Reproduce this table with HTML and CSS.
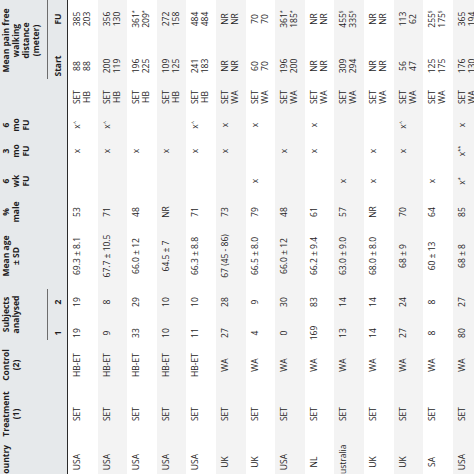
FILE: index.html
```html
<!DOCTYPE html>
<html>
<head>
<meta charset="utf-8">
<link rel="stylesheet" href="styles.css">
</head>
<body>
<div class="sheet">
  <div class="cols head">
    <div class="h tall">Country</div>
    <div class="h tall"><span>Treatment</span><span>(1)</span></div>
    <div class="h tall"><span>Control</span><span>(2)</span></div>
    <div class="h grp subj"><span>Subjects</span><span>analysed</span></div>
    <div class="h tall"><span>Mean age</span><span>± SD</span></div>
    <div class="h tall"><span>%</span><span>male</span></div>
    <div class="h tall"><span>6</span><span>wk</span><span>FU</span></div>
    <div class="h tall"><span>3</span><span>mo</span><span>FU</span></div>
    <div class="h tall"><span>6</span><span>mo</span><span>FU</span></div>
    <div class="h tall"></div>
    <div class="h grp mpf"><span>Mean pain free</span><span>walking</span><span>distance</span><span>(meter)</span></div>
    <div class="h sub">1</div>
    <div class="h sub">2</div>
    <div class="h sub">Start</div>
    <div class="h sub">FU</div>
  </div>
  <div class="body">
    <div class="cols row"><div class="c">USA</div><div class="c">SET</div><div class="c">HB-ET</div><div class="c">19</div><div class="c">19</div><div class="c">69.3 ± 8.1</div><div class="c">53</div><div class="c"></div><div class="c">x</div><div class="c"><span>x<sup>^</sup></span></div><div class="c"><span>SET</span><span>HB</span></div><div class="c"><span>88</span><span>88</span></div><div class="c"><span>385</span><span>203</span></div></div>
    <div class="cols row"><div class="c">USA</div><div class="c">SET</div><div class="c">HB-ET</div><div class="c">9</div><div class="c">8</div><div class="c">67.7 ± 10.5</div><div class="c">71</div><div class="c"></div><div class="c">x</div><div class="c"><span>x<sup>^</sup></span></div><div class="c"><span>SET</span><span>HB</span></div><div class="c"><span>200</span><span>119</span></div><div class="c"><span>356</span><span>130</span></div></div>
    <div class="cols row"><div class="c">USA</div><div class="c">SET</div><div class="c">HB-ET</div><div class="c">33</div><div class="c">29</div><div class="c">66.0 ± 12</div><div class="c">48</div><div class="c"></div><div class="c">x</div><div class="c"></div><div class="c"><span>SET</span><span>HB</span></div><div class="c"><span>196</span><span>225</span></div><div class="c"><span>361<sup>*</sup></span><span>209<sup>*</sup></span></div></div>
    <div class="cols row"><div class="c">USA</div><div class="c">SET</div><div class="c">HB-ET</div><div class="c">10</div><div class="c">10</div><div class="c">64.5 ± 7</div><div class="c">NR</div><div class="c"></div><div class="c">x</div><div class="c"></div><div class="c"><span>SET</span><span>HB</span></div><div class="c"><span>109</span><span>125</span></div><div class="c"><span>272</span><span>158</span></div></div>
    <div class="cols row"><div class="c">USA</div><div class="c">SET</div><div class="c">HB-ET</div><div class="c">11</div><div class="c">10</div><div class="c">66.3 ± 8.8</div><div class="c">71</div><div class="c"></div><div class="c">x</div><div class="c"><span>x<sup>^</sup></span></div><div class="c"><span>SET</span><span>HB</span></div><div class="c"><span>241</span><span>183</span></div><div class="c"><span>484</span><span>484</span></div></div>
    <div class="cols row"><div class="c">UK</div><div class="c">SET</div><div class="c">WA</div><div class="c">27</div><div class="c">28</div><div class="c">67 (45 - 86)</div><div class="c">73</div><div class="c"></div><div class="c">x</div><div class="c">x</div><div class="c"><span>SET</span><span>WA</span></div><div class="c"><span>NR</span><span>NR</span></div><div class="c"><span>NR</span><span>NR</span></div></div>
    <div class="cols row"><div class="c">UK</div><div class="c">SET</div><div class="c">WA</div><div class="c">4</div><div class="c">9</div><div class="c">66.5 ± 8.0</div><div class="c">79</div><div class="c">x</div><div class="c"></div><div class="c">x</div><div class="c"><span>SET</span><span>WA</span></div><div class="c"><span>60</span><span>70</span></div><div class="c"><span>70</span><span>70</span></div></div>
    <div class="cols row"><div class="c">USA</div><div class="c">SET</div><div class="c">WA</div><div class="c">0</div><div class="c">30</div><div class="c">66.0 ± 12</div><div class="c">48</div><div class="c"></div><div class="c">x</div><div class="c"></div><div class="c"><span>SET</span><span>WA</span></div><div class="c"><span>196</span><span>200</span></div><div class="c"><span>361<sup>*</sup></span><span>185<sup>*</sup></span></div></div>
    <div class="cols row"><div class="c">NL</div><div class="c">SET</div><div class="c">WA</div><div class="c">169</div><div class="c">83</div><div class="c">66.2 ± 9.4</div><div class="c">61</div><div class="c"></div><div class="c">x</div><div class="c">x</div><div class="c"><span>SET</span><span>WA</span></div><div class="c"><span>NR</span><span>NR</span></div><div class="c"><span>NR</span><span>NR</span></div></div>
    <div class="cols row"><div class="c">Australia</div><div class="c">SET</div><div class="c">WA</div><div class="c">13</div><div class="c">14</div><div class="c">63.0 ± 9.0</div><div class="c">57</div><div class="c">x</div><div class="c"></div><div class="c"></div><div class="c"><span>SET</span><span>WA</span></div><div class="c"><span>309</span><span>294</span></div><div class="c"><span>455<sup>§</sup></span><span>335<sup>§</sup></span></div></div>
    <div class="cols row"><div class="c">UK</div><div class="c">SET</div><div class="c">WA</div><div class="c">14</div><div class="c">14</div><div class="c">68.0 ± 8.0</div><div class="c">NR</div><div class="c">x</div><div class="c">x</div><div class="c"></div><div class="c"><span>SET</span><span>WA</span></div><div class="c"><span>NR</span><span>NR</span></div><div class="c"><span>NR</span><span>NR</span></div></div>
    <div class="cols row"><div class="c">UK</div><div class="c">SET</div><div class="c">WA</div><div class="c">27</div><div class="c">24</div><div class="c">68 ± 9</div><div class="c">70</div><div class="c"></div><div class="c">x</div><div class="c"><span>x<sup>^</sup></span></div><div class="c"><span>SET</span><span>WA</span></div><div class="c"><span>56</span><span>47</span></div><div class="c"><span>113</span><span>62</span></div></div>
    <div class="cols row"><div class="c">SA</div><div class="c">SET</div><div class="c">WA</div><div class="c">8</div><div class="c">8</div><div class="c">60 ± 13</div><div class="c">64</div><div class="c">x</div><div class="c"></div><div class="c"></div><div class="c"><span>SET</span><span>WA</span></div><div class="c"><span>125</span><span>175</span></div><div class="c"><span>255<sup>§</sup></span><span>175<sup>§</sup></span></div></div>
    <div class="cols row"><div class="c">USA</div><div class="c">SET</div><div class="c">WA</div><div class="c">80</div><div class="c">27</div><div class="c">68 ± 8</div><div class="c">85</div><div class="c"><span>x<sup>*</sup></span></div><div class="c"><span>x<sup>**</sup></span></div><div class="c">x</div><div class="c"><span>SET</span><span>WA</span></div><div class="c"><span>176</span><span>130</span></div><div class="c"><span>365</span><span>194</span></div></div>
  </div>
</div>
</body>
</html>
```
FILE: styles.css
```css
html, body {
  margin: 0;
  padding: 0;
  overflow: hidden;
  background: #ffffff;
}
body {
  width: 474px;
  height: 474px;
  font-family: "Open Sans", "Liberation Sans", sans-serif;
  color: #1e1c1d;
}
.sheet {
  width: 490px;
  transform-origin: 0 0;
  transform: translate(0, 478px) rotate(-90deg);
}
.cols {
  display: grid;
  grid-template-columns: 32px 64px 34px 30px 32px 60px 28px 34px 26px 26px 30px 32px 62px;
}
.head {
  grid-template-rows: 48px 19px;
  background: #e6e9eb;
  border-bottom: 1px solid #2b2b2b;
  font-weight: 700;
  font-size: 8.5px;
  line-height: 10px;
}
.h {
  display: flex;
  flex-direction: column;
  align-items: center;
  padding-top: 1px;
  white-space: nowrap;
}
.tall {
  grid-row: span 2;
}
.grp {
  grid-column: span 2;
  border-bottom: 1px solid #6d6d6d;
}
.subj {
  margin: 0 3px 0 8px;
}
.mpf {
  margin: 0 0 0 3px;
  padding-right: 14px;
}
.sub {
  justify-content: center;
  padding-top: 0;
}
.row {
  font-size: 8.5px;
  line-height: 10px;
  padding: 4px 0 5.6px;
  height: 20px;
}
.row:nth-child(even) {
  background: #f3f3f3;
}
.c {
  display: flex;
  flex-direction: column;
  align-items: center;
  white-space: nowrap;
}
sup {
  font-size: 5.5px;
  line-height: 0;
  vertical-align: 3px;
}
```
